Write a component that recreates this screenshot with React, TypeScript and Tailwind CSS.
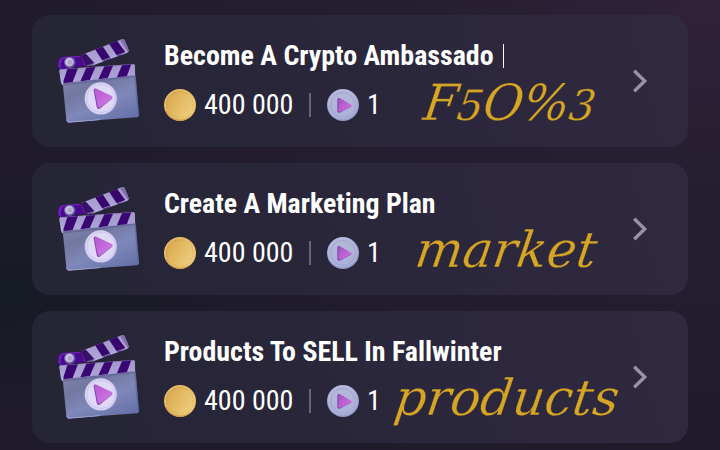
import { useLayoutEffect, useRef, useState } from "react";
import type { ReactNode } from "react";

/** Condenses a line of text so that it fills the given width. */
function Fit({ width, className, slant = 0, children }: { width: number; className: string; slant?: number; children: ReactNode }) {
  const ref = useRef<HTMLSpanElement>(null);
  const [scale, setScale] = useState(1);
  useLayoutEffect(() => {
    if (ref.current) setScale(width / ref.current.offsetWidth);
  }, [width]);
  return (
    <span className="block" style={{ width }}>
      <span
        ref={ref}
        className={`inline-block origin-left whitespace-nowrap ${className}`}
        style={{ transform: `skewX(${-slant}deg) scaleX(${scale})` }}
      >
        {children}
      </span>
    </span>
  );
}

function Clapper() {
  return (
    <svg viewBox="0 0 300 300" className="size-[100px] shrink-0">
      <defs>
        <linearGradient id="body" x1="0.1" y1="0" x2="0.8" y2="1">
          <stop offset="0" stopColor="#8487b2" />
          <stop offset="0.3" stopColor="#72779f" />
          <stop offset="0.6" stopColor="#7f88b9" />
          <stop offset="1" stopColor="#6470a8" />
        </linearGradient>
        <linearGradient id="bar" x1="0" y1="0" x2="0" y2="1">
          <stop offset="0" stopColor="#a195c6" />
          <stop offset="1" stopColor="#b0a8dc" />
        </linearGradient>
        <linearGradient id="pink" x1="0" y1="0" x2="1" y2="1">
          <stop offset="0" stopColor="#b45bd0" />
          <stop offset="1" stopColor="#d27be8" />
        </linearGradient>
        <clipPath id="armClip">
          <path d="M92 76 L217 27 Q222 26 224 31 L236 60 Q237 66 232 68 L124 108 L106 108 Z" />
        </clipPath>
        <clipPath id="barClip">
          <path d="M30 118 L250 102 Q255 102 255 107 L256 136 L45 159 Q40 159 38 153 L28 124 Z" />
        </clipPath>
      </defs>
      <path d="M28 122 L36 116 L48 160 L42 166 Q36 168 33 158 Z" fill="#b5b1dc" />
      <path d="M38 158 L256 134 L267 256 Q267 261 261 262 L58 277 Q51 278 49 270 Z" fill="url(#body)" />
      <path d="M49 268 Q52 276 59 275 L150 268 L150 270 L58 278 Q51 279 49 271 Z" fill="#a4abd8" />
      <path d="M253 140 L258 140 L267 252 L262 252 Z" fill="#5a64a0" opacity="0.6" />
      <path d="M39 160 L254 136 L255 141 L41 167 Z" fill="#5f6294" opacity="0.65" />
      <path d="M24 98 Q24 83 40 81 L72 78 Q86 76 94 82 L112 106 L34 118 Q24 118 24 106 Z" fill="#4a0a90" />
      <path d="M25 106 Q24 83 40 81 L88 77 L91 81 L43 85 Q31 88 33 117 Q24 114 25 106 Z" fill="#6a22ae" />
      <g clipPath="url(#armClip)">
        <rect x="85" y="20" width="160" height="95" fill="url(#bar)" />
        <path d="M85 72 L105 68 L134 100 L116 114 L97 104 Z" fill="#38106a" />
        <path d="M134 56 L156 46 L183 86 L160 96 Z" fill="#38076e" />
        <path d="M176 40 L199 30 L213 51 L212 76 L203 80 Z" fill="#38076e" />
        <path d="M199 30 L226 66 L206 78 L180 38 Z" fill="#38076e" />
        <path d="M216 24 L228 24 L240 62 L234 66 L212 32 Z" fill="#7f6fae" />
        <path d="M108 109 L234 65" stroke="#b9aede" strokeWidth="2" />
      </g>
      <circle cx="59" cy="97" r="17" fill="#6d5ca4" />
      <circle cx="58" cy="96" r="13" fill="#c4bedd" />
      <circle cx="60" cy="97" r="7" fill="#aaa1cb" />
      <g clipPath="url(#barClip)">
        <rect x="20" y="95" width="240" height="72" fill="url(#bar)" />
        <path d="M53 114 L85 111 L67 158 L38 161 Z" fill="#3a0673" />
        <path d="M111 109 L138 107 L119 151 L91 154 Z" fill="#3a0673" />
        <path d="M165 105 L191 103 L173 145 L145 148 Z" fill="#3a0673" />
        <path d="M218 101 L245 99 L230 140 L200 143 Z" fill="#3a0673" />
        <path d="M29 118 L250 102 L255 105" fill="none" stroke="#7d67a9" strokeWidth="2" />
      </g>
      <circle cx="155" cy="207" r="48" fill="#8c88c8" />
      <circle cx="152" cy="205" r="48" fill="#d6d2f1" />
      <circle cx="153" cy="205" r="42" fill="#dedaf6" stroke="#c8c3ea" strokeWidth="2" />
      <path d="M137 176 L184 199 Q190 202 185 207 L149 236 Q142 239 140 231 L131 181 Q131 174 137 176 Z" fill="#8845af" />
      <path d="M139 176 L185 198 Q190 202 185 206 L151 232 Q145 235 143 229 L134 181 Q134 175 139 176 Z" fill="url(#pink)" />
    </svg>
  );
}

function GoldCoin() {
  return (
    <svg viewBox="0 0 96 96" className="size-8 shrink-0">
      <defs>
        <linearGradient id="gold" x1="0" y1="0.2" x2="1" y2="0.8">
          <stop offset="0" stopColor="#d9a850" />
          <stop offset="0.5" stopColor="#e4bc65" />
          <stop offset="1" stopColor="#efd083" />
        </linearGradient>
      </defs>
      <circle cx="48" cy="48" r="48" fill="#e9bf68" />
      <circle cx="48" cy="48" r="44" fill="url(#gold)" />
      <circle cx="48" cy="48" r="39" fill="none" stroke="#bd8639" strokeWidth="2" strokeDasharray="3 5" opacity="0.75" />
      <path d="M6 66 A46 46 0 0 0 74 86" fill="none" stroke="#c99543" strokeWidth="3" />
    </svg>
  );
}

function PlayCoin() {
  return (
    <svg viewBox="0 0 96 96" className="size-8 shrink-0">
      <defs>
        <linearGradient id="silver" x1="0.3" y1="0" x2="0.6" y2="1">
          <stop offset="0" stopColor="#b6bad9" />
          <stop offset="1" stopColor="#aab0da" />
        </linearGradient>
        <linearGradient id="tri" x1="0" y1="0" x2="1" y2="1">
          <stop offset="0" stopColor="#9c51c3" />
          <stop offset="1" stopColor="#dc72e2" />
        </linearGradient>
      </defs>
      <circle cx="48" cy="48" r="48" fill="#969fc8" />
      <circle cx="47" cy="46" r="45" fill="url(#silver)" />
      <circle cx="48" cy="48" r="37" fill="none" stroke="#949bc5" strokeWidth="2" />
      <path d="M38 28 L70 47 Q76 51 70 54 L38 71 Q31 73 31 66 L31 33 Q31 25 38 28 Z" fill="#7d43a3" />
      <path d="M40 29 L71 47 Q76 50 70 53 L40 68 Q34 70 34 64 L34 34 Q34 26 40 29 Z" fill="url(#tri)" />
    </svg>
  );
}

const tasks = [
  {
    title: "Become A Crypto Ambassado",
    width: 330,
    cursor: true,
    note: (
      <>
        F<span className="text-[42px]">5</span>O%<span className="text-[42px]">3</span>
      </>
    ),
    noteWidth: 172,
    notePlace: "left-[392px] top-[59px]",
  },
  { title: "Create A Marketing Plan", width: 272, cursor: false, note: <>market</>, noteWidth: 181, notePlace: "left-[384px] top-[58px]" },
  { title: "Products To SELL In Fallwinter", width: 338, cursor: false, note: <>products</>, noteWidth: 224, notePlace: "left-[363px] top-[58px]" },
];

export default function App() {
  return (
    <main className="h-[450px] w-[720px] overflow-hidden bg-[#1f1b2b] bg-[radial-gradient(ellipse_at_100%_0%,#302239_0%,#2a203499_30%,transparent_75%),radial-gradient(ellipse_at_0%_65%,#161b24_0%,transparent_28%)] px-8 pt-[15px] font-['Roboto_Condensed','Roboto',sans-serif] text-white">
      <div className="flex flex-col gap-4">
        {tasks.map((task) => (
          <section key={task.title} className="relative flex h-[132px] rounded-[18px] bg-[linear-gradient(75deg,#252535_0%,#29263a_40%,#30293f_100%)] pt-[15px] pl-[18px]">
            <Clapper />
            <div className="ml-[14px] flex flex-1 flex-col">
              <div className="mt-[10px] flex h-8 items-center">
                <Fit width={task.width} className="text-[27px] leading-8 font-bold [font-stretch:75%]">
                  {task.title}
                </Fit>
                {task.cursor && <i className="ml-[9px] h-6 w-px bg-white" />}
              </div>
              <div className="mt-[17px] flex h-8 items-center">
                <GoldCoin />
                <div className="ml-2">
                  <Fit width={89} className="text-[28px] leading-8 [font-stretch:75%]">400 000</Fit>
                </div>
                <i className="ml-4 h-6 w-[2px] bg-[#686475]" />
                <div className="ml-4">
                  <PlayCoin />
                </div>
                <div className="ml-2">
                  <Fit width={14} className="text-[28px] leading-8 [font-stretch:75%]">1</Fit>
                </div>
              </div>
            </div>
            <svg viewBox="0 0 16 24" className="mt-[39px] mr-10 h-6 w-4 shrink-0" fill="none" stroke="#9892a5" strokeWidth="3.4">
              <path d="M2.2 1.7 L12.7 12 L2.2 22.3" />
            </svg>
            <div className={`absolute ${task.notePlace}`}>
              <Fit width={task.noteWidth} slant={8} className="font-['DejaVu_Serif'] text-[50px] leading-[58px] text-[#d6a523] italic [-webkit-text-stroke:0.3px_#2d283c]">
                {task.note}
              </Fit>
            </div>
          </section>
        ))}
      </div>
    </main>
  );
}
